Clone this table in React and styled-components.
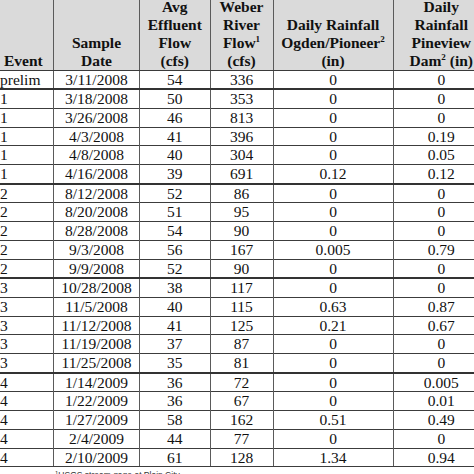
import React from "react";
import styled, { createGlobalStyle } from "styled-components";

const Global = createGlobalStyle`
  html, body { margin: 0; padding: 0; background: #fff; overflow: hidden; }
  body { width: 474px; height: 474px; }
`;

const Page = styled.div`
  width: 474px;
  height: 474px;
  overflow: hidden;
  font-family: "Liberation Serif", "Times New Roman", serif;
  color: #111;
`;

const Table = styled.table`
  border-collapse: collapse;
  table-layout: fixed;
  width: 489px;
  margin-top: -2.5px;
  font-size: 15.5px;
`;

const HeadCell = styled.th`
  background: #dadada;
  font-weight: bold;
  line-height: 18px;
  padding: 0 0 0 ${(p) => p.$padLeft || 0}px;
  vertical-align: bottom;
  text-align: ${(p) => p.$align || "center"};
  border-left: ${(p) => (p.$first ? "none" : "1.5px solid #5a5a5a")};
  border-bottom: 1.5px solid #3a3a3a;
  white-space: nowrap;
`;

const Sup = styled.sup`
  font-size: 9px;
  line-height: 0;
  vertical-align: 6px;
`;

const Row = styled.tr`
  & > td {
    border-top: ${(p) => (p.$groupStart ? "2.5px solid #333" : "1px solid #3c3c3c")};
  }
`;

const Cell = styled.td`
  height: 17.7px;
  line-height: 17.7px;
  padding: 0;
  font-weight: normal;
  text-align: ${(p) => p.$align || "center"};
  border-left: ${(p) => (p.$first ? "none" : "1.5px solid #5a5a5a")};
  white-space: nowrap;
  overflow: hidden;
`;

const Body = styled.tbody`
  & > tr:last-child > td {
    border-bottom: 1px solid #3c3c3c;
  }
`;

const Footnote = styled.div`
  font-family: "Liberation Sans", Arial, sans-serif;
  font-size: 8.5px;
  line-height: 10px;
  color: #333;
  padding: 1px 0 0 55px;
`;

const FootSup = styled.span`
  font-size: 6px;
  vertical-align: 3px;
`;

const rows = [
  ["prelim", "3/11/2008", "54", "336", "0", "0"],
  ["1", "3/18/2008", "50", "353", "0", "0", true],
  ["1", "3/26/2008", "46", "813", "0", "0"],
  ["1", "4/3/2008", "41", "396", "0", "0.19"],
  ["1", "4/8/2008", "40", "304", "0", "0.05"],
  ["1", "4/16/2008", "39", "691", "0.12", "0.12"],
  ["2", "8/12/2008", "52", "86", "0", "0", true],
  ["2", "8/20/2008", "51", "95", "0", "0"],
  ["2", "8/28/2008", "54", "90", "0", "0"],
  ["2", "9/3/2008", "56", "167", "0.005", "0.79"],
  ["2", "9/9/2008", "52", "90", "0", "0"],
  ["3", "10/28/2008", "38", "117", "0", "0", true],
  ["3", "11/5/2008", "40", "115", "0.63", "0.87"],
  ["3", "11/12/2008", "41", "125", "0.21", "0.67"],
  ["3", "11/19/2008", "37", "87", "0", "0"],
  ["3", "11/25/2008", "35", "81", "0", "0"],
  ["4", "1/14/2009", "36", "72", "0", "0.005", true],
  ["4", "1/22/2009", "36", "67", "0", "0.01"],
  ["4", "1/27/2009", "58", "162", "0.51", "0.49"],
  ["4", "2/4/2009", "44", "77", "0", "0"],
  ["4", "2/10/2009", "61", "128", "1.34", "0.94"],
];

const widths = [53.5, 86, 70.5, 63, 120, 96];

export default function App() {
  return (
    <>
      <Global />
      <Page>
        <Table>
          <colgroup>
            {widths.map((w, i) => (
              <col key={i} style={{ width: w }} />
            ))}
          </colgroup>
          <thead>
            <tr>
              <HeadCell $first $align="left" $padLeft={4}>Event</HeadCell>
              <HeadCell>Sample<br />Date</HeadCell>
              <HeadCell>Avg<br />Effluent<br />Flow<br />(cfs)</HeadCell>
              <HeadCell>Weber<br />River<br />Flow<Sup>1</Sup><br />(cfs)</HeadCell>
              <HeadCell>Daily Rainfall<br />Ogden/Pioneer<Sup>2</Sup><br />(in)</HeadCell>
              <HeadCell>Daily<br />Rainfall<br />Pineview<br />Dam<Sup>2</Sup> (in)</HeadCell>
            </tr>
          </thead>
          <Body>
            {rows.map((r, i) => (
              <Row key={i} $groupStart={r[6]}>
                <Cell $first $align="left">{r[0]}</Cell>
                <Cell>{r[1]}</Cell>
                <Cell>{r[2]}</Cell>
                <Cell>{r[3]}</Cell>
                <Cell>{r[4]}</Cell>
                <Cell>{r[5]}</Cell>
              </Row>
            ))}
          </Body>
        </Table>
        <Footnote><FootSup>1</FootSup>USGS stream gage at Plain City</Footnote>
      </Page>
    </>
  );
}
